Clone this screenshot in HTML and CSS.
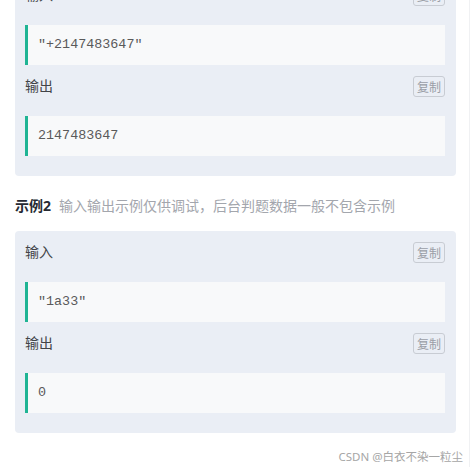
FILE: index.html
```html
<!DOCTYPE html>
<html lang="zh-CN">
<head>
    <meta charset="UTF-8">
    <title>示例</title>
    <link rel="stylesheet" href="styles.css">
</head>
<body>
    <div class="page">
        <div class="example-card first">
            <div class="io-head">
                <span class="io-label">输入</span>
                <button class="copy-btn">复制</button>
            </div>
            <pre class="io-pre">"+2147483647"</pre>
            <div class="io-head">
                <span class="io-label">输出</span>
                <button class="copy-btn">复制</button>
            </div>
            <pre class="io-pre">2147483647</pre>
        </div>

        <div class="example-title">
            <b>示例2</b>
            <span>输入输出示例仅供调试，后台判题数据一般不包含示例</span>
        </div>

        <div class="example-card">
            <div class="io-head">
                <span class="io-label">输入</span>
                <button class="copy-btn">复制</button>
            </div>
            <pre class="io-pre">"1a33"</pre>
            <div class="io-head">
                <span class="io-label">输出</span>
                <button class="copy-btn">复制</button>
            </div>
            <pre class="io-pre">0</pre>
        </div>

        <div class="watermark">CSDN @白衣不染一粒尘</div>
    </div>
</body>
</html>
```

FILE: styles.css
```css
html, body {
    margin: 0;
    padding: 0;
    background: #fff;
    font-family: 'Noto Sans', 'Noto Sans CJK SC', sans-serif;
    height: 100%;
    overflow: hidden;
}
.page {
    display: flow-root;
    width: 470px;
    min-height: 100%;
    border-right: 1px solid #f0f1f3;
    box-sizing: border-box;
    padding: 0 14px 0 15px;
}
.example-card {
    width: 441px;
    box-sizing: border-box;
    background: #eaeef5;
    border-radius: 4px;
    padding: 11px 11px 20px 10px;
}
.example-card.first {
    margin-top: -26px;
}
.io-head {
    display: flex;
    justify-content: space-between;
    align-items: center;
    height: 21px;
    margin-bottom: 19px;
}
.io-pre + .io-head {
    margin-top: 11px;
}
.io-label {
    font-size: 14px;
    color: #424448;
    margin-bottom: 3px;
}
.copy-btn {
    width: 32px;
    height: 21px;
    padding: 0;
    border: 1px solid #c8ccd3;
    border-radius: 3px;
    background: transparent;
    color: #9a9ea6;
    font-size: 12px;
    font-family: 'Noto Sans CJK SC', sans-serif;
    line-height: 19px;
}
.io-pre {
    margin: 0;
    height: 40px;
    box-sizing: border-box;
    background: #f8f9fa;
    border-left: 3px solid #1fb494;
    padding: 0 10px;
    font-family: 'Liberation Mono', monospace;
    font-size: 13.4px;
    line-height: 40px;
    color: #5a5a5a;
}
.example-title {
    height: 55px;
    display: flex;
    align-items: center;
    gap: 8px;
    font-size: 14px;
    padding-top: 3px;
    box-sizing: border-box;
}
.example-title b {
    color: #262a33;
}
.example-title span {
    color: #a3a6ad;
}
.watermark {
    text-align: right;
    margin-top: 15px;
    margin-right: -8px;
    font-size: 11.5px;
    line-height: 18px;
    color: #a6a6a6;
}
```
